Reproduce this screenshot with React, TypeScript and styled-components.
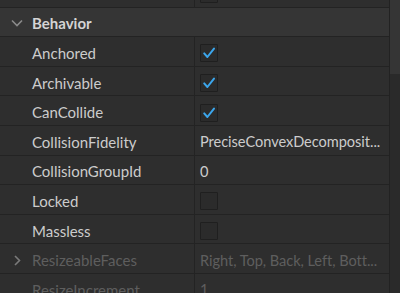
import React from "react";
import styled, { createGlobalStyle } from "styled-components";

const Global = createGlobalStyle`
  html, body { margin: 0; padding: 0; background: #2e2e2e; }
  body { width: 400px; height: 293px; overflow: hidden; font-family: "Lato", "Open Sans", sans-serif; }
`;

const Panel = styled.div`
  display: flex;
  width: 400px;
  height: 293px;
  background: #2e2e2e;
  overflow: hidden;
`;

const Viewport = styled.div`
  flex: 1;
  overflow: hidden;
`;

const Content = styled.div<{ $scroll: number }>`
  display: flex;
  flex-direction: column;
  margin-top: ${(p) => -p.$scroll}px;
`;

const Header = styled.div`
  display: flex;
  align-items: center;
  height: 29.6px;
  padding-top: 2px;
  background: #353535;
  border-bottom: 1px solid #232323;
  box-sizing: border-box;
  color: #d4d4d4;
  font-weight: 700;
  font-size: 15px;
`;

const Expander = styled.span`
  width: 32px;
  display: flex;
  justify-content: center;
  align-items: center;
  padding-left: 2px;
  box-sizing: border-box;
`;

const Row = styled.div`
  display: grid;
  grid-template-columns: 195px 1fr;
  height: 29.6px;
  border-bottom: 1px solid #232323;
  box-sizing: border-box;
  background: #2e2e2e;
`;

const NameCell = styled.div<{ $disabled?: boolean }>`
  display: flex;
  align-items: center;
  padding-top: 3px;
  border-right: 1px solid #232323;
  color: ${(p) => (p.$disabled ? "#5e5e5e" : "#cccccc")};
  font-size: 15px;
  white-space: nowrap;
  overflow: hidden;
`;

const ValueCell = styled.div<{ $disabled?: boolean }>`
  display: flex;
  align-items: center;
  padding-left: 5px;
  padding-top: 3px;
  color: ${(p) => (p.$disabled ? "#5e5e5e" : "#cccccc")};
  font-size: 14.6px;
  white-space: nowrap;
  overflow: hidden;
  box-sizing: border-box;
  min-width: 0;
`;

const ValueText = styled.span`
  letter-spacing: -0.05px;
`;

const Box = styled.span`
  width: 18px;
  height: 18px;
  box-sizing: border-box;
  border: 1px solid #1f1f1f;
  background: #2b2b2b;
  border-radius: 1px;
  display: flex;
  align-items: center;
  justify-content: center;
  margin-top: 1px;
`;

const Scrollbar = styled.div`
  width: 10px;
  border-left: 1px solid #222222;
  background: #2a2a2a;
  display: flex;
  flex-direction: column;
`;

const Thumb = styled.div`
  height: 74px;
  background: #353535;
`;

type Prop = {
  name: string;
  kind: "check" | "text";
  checked?: boolean;
  value?: string;
  disabled?: boolean;
  expandable?: boolean;
};

const Check = () => (
  <svg width="14" height="14" viewBox="0 0 14 14">
    <path d="M2.2 7.4 L5.4 11 L12 2.6" fill="none" stroke="#3ba6ec" strokeWidth="2" strokeLinecap="round" strokeLinejoin="round" />
  </svg>
);

const ChevronDown = () => (
  <svg width="12" height="8" viewBox="0 0 12 8">
    <path d="M1 1.5 L6 6.5 L11 1.5" fill="none" stroke="#8a8a8a" strokeWidth="1.6" />
  </svg>
);

const ChevronRight = () => (
  <svg width="7" height="11" viewBox="0 0 7 11">
    <path d="M1 1 L5.5 5.5 L1 10" fill="none" stroke="#7a7a7a" strokeWidth="1.6" />
  </svg>
);

const props: Prop[] = [
  { name: "Anchored", kind: "check", checked: true },
  { name: "Archivable", kind: "check", checked: true },
  { name: "CanCollide", kind: "check", checked: true },
  { name: "CollisionFidelity", kind: "text", value: "PreciseConvexDecomposit..." },
  { name: "CollisionGroupId", kind: "text", value: "0" },
  { name: "Locked", kind: "check", checked: false },
  { name: "Massless", kind: "check", checked: false },
  { name: "ResizeableFaces", kind: "text", value: "Right, Top, Back, Left, Bott...", disabled: true, expandable: true },
  { name: "ResizeIncrement", kind: "text", value: "1", disabled: true },
];

const PropRow = ({ p }: { p: Prop }) => (
  <Row>
    <NameCell $disabled={p.disabled}>
      <Expander>{p.expandable ? <ChevronRight /> : null}</Expander>
      {p.name}
    </NameCell>
    <ValueCell $disabled={p.disabled}>
      {p.kind === "check" ? (
        <Box>{p.checked ? <Check /> : null}</Box>
      ) : (
        <ValueText>{p.value}</ValueText>
      )}
    </ValueCell>
  </Row>
);

export default function App() {
  return (
    <>
      <Global />
      <Panel>
        <Viewport>
          <Content $scroll={22}>
            <PropRow p={{ name: "", kind: "check", checked: false }} />
            <Header>
              <Expander>
                <ChevronDown />
              </Expander>
              Behavior
            </Header>
            {props.map((p) => (
              <PropRow key={p.name} p={p} />
            ))}
          </Content>
        </Viewport>
        <Scrollbar>
          <Thumb />
        </Scrollbar>
      </Panel>
    </>
  );
}
